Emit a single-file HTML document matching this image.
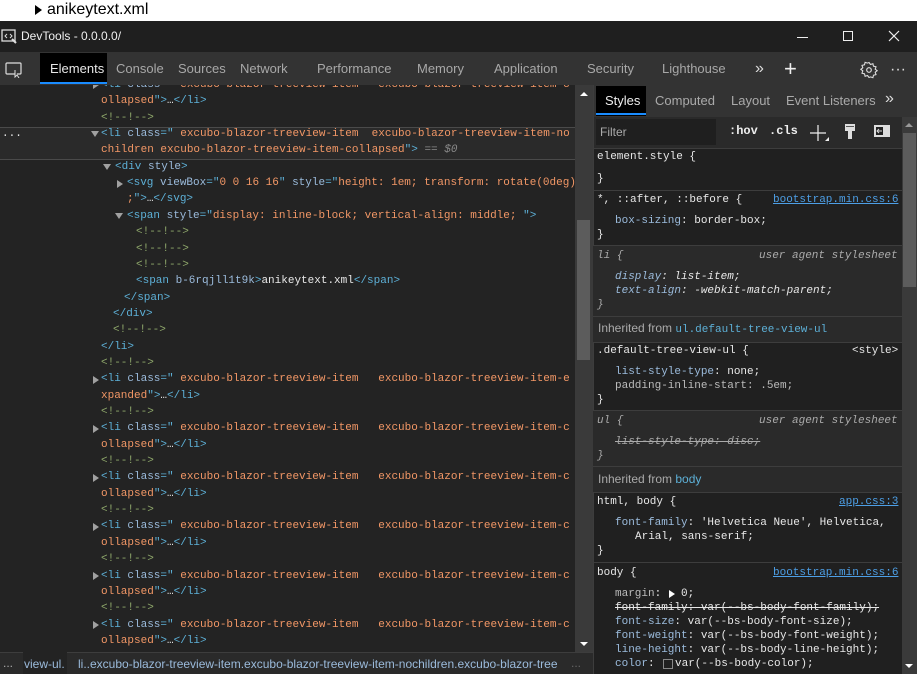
<!DOCTYPE html>
<html><head><meta charset="utf-8"><style>
*{margin:0;padding:0;box-sizing:border-box}
body{width:917px;height:674px;overflow:hidden;background:#232323;font-family:"Liberation Sans",sans-serif;position:relative}
.a{position:absolute;white-space:pre}
.m{font-family:"Liberation Mono",monospace;font-size:11px;line-height:16px}
.t{color:#5db0d7}.n{color:#9bbbdc}.v{color:#f29766}.c{color:#8fa86b}.w{color:#e8e8e8}.g{color:#8a8a8a}
.pn{color:#9bbbdc}.pv{color:#e8e8e8}.lk{color:#4d9fe6;text-decoration:underline}
.tri{position:absolute;width:0;height:0}
.tr{border-left:6px solid #a0a0a0;border-top:4px solid transparent;border-bottom:4px solid transparent}
.td{border-top:6px solid #a0a0a0;border-left:4px solid transparent;border-right:4px solid transparent}
.sep{position:absolute;left:593px;width:309px;height:1px;background:#3d3d3d}
.tab{position:absolute;top:52px;height:33px;line-height:33px;font-size:13px;color:#a8a8a8}
</style></head><body>
<div class="a" style="left:0;top:0;width:917px;height:21px;background:#fff"></div>
<div class="tri" style="left:35px;top:5px;border-left:7px solid #000;border-top:5px solid transparent;border-bottom:5px solid transparent"></div>
<div class="a" style="left:47px;top:1px;font-size:16px;color:#000">anikeytext.xml</div>
<div class="a" style="left:0;top:21px;width:917px;height:31px;background:#1f1f1f"></div>
<svg class="a" style="left:1px;top:28px" width="16" height="16" viewBox="0 0 16 16"><rect x="1" y="2" width="13" height="11" fill="none" stroke="#ddd" stroke-width="1.3"/><path d="M6 6l-2 2 2 2M9 6l2 2-2 2" stroke="#ddd" fill="none"/><path d="M11 11l4 4" stroke="#ddd" stroke-width="2"/></svg>
<div class="a" style="left:21px;top:29px;font-size:12px;color:#f0f0f0">DevTools - 0.0.0.0/</div>
<div class="a" style="left:797px;top:37px;width:11px;height:1px;background:#eee"></div>
<div class="a" style="left:843px;top:31px;width:10px;height:10px;border:1px solid #eee"></div>
<svg class="a" style="left:888px;top:30px" width="12" height="12"><path d="M1 1L11 11M11 1L1 11" stroke="#eee" stroke-width="1.2"/></svg>
<div class="a" style="left:0;top:52px;width:917px;height:33px;background:#333"></div>
<svg class="a" style="left:5px;top:62px" width="18" height="16"><rect x="1" y="1" width="15" height="11" rx="1" fill="none" stroke="#ddd" stroke-width="1.2"/><path d="M10 8l0 7 2-2 2 3" stroke="#ddd" fill="#333"/></svg>
<div class="a" style="left:40px;top:53px;width:67px;height:30px;background:#000"></div>
<div class="a" style="left:40px;top:82px;width:67px;height:2px;background:#1a8cff"></div>
<div class="tab" style="left:50px;color:#e8e8e8">Elements</div>
<div class="tab" style="left:116px">Console</div>
<div class="tab" style="left:178px">Sources</div>
<div class="tab" style="left:240px">Network</div>
<div class="tab" style="left:317px">Performance</div>
<div class="tab" style="left:417px">Memory</div>
<div class="tab" style="left:494px">Application</div>
<div class="tab" style="left:587px">Security</div>
<div class="tab" style="left:662px">Lighthouse</div>
<div class="tab" style="left:755px;color:#ddd;font-size:16px">»</div>
<div class="tab" style="left:784px;color:#eee;font-size:22px;font-weight:300">+</div>
<svg class="a" style="left:860px;top:61px" width="18" height="18" viewBox="0 0 18 18"><circle cx="9" cy="9" r="2.3" fill="none" stroke="#ddd" stroke-width="1.2"/><path d="M9 1.5l1.5 2 2.4-.8.6 2.5 2.5.6-.8 2.4 2 1.5-2 1.5.8 2.4-2.5.6-.6 2.5-2.4-.8L9 16.5l-1.5-2-2.4.8-.6-2.5-2.5-.6.8-2.4-2-1.5 2-1.5-.8-2.4 2.5-.6.6-2.5 2.4.8z" fill="none" stroke="#ddd" stroke-width="1.1"/></svg>
<div class="tab" style="left:890px;color:#ddd;font-size:16px;top:53px">···</div>

<div class="a" style="left:0;top:85px;width:576px;height:567px;overflow:hidden;background:#232323">
 <div class="a" style="left:0;top:42px;width:576px;height:33px;background:#2a2a2a;border-top:1px solid #4a4a4a;border-bottom:1px solid #4a4a4a"></div>
 <div class="a m" style="left:0;top:-8px;line-height:16.35px">
<div class="a" style="left:101px;top:0"><span class="t">&lt;li </span><span class="n">class</span><span class="t">="</span><span class="v"> excubo-blazor-treeview-item   excubo-blazor-treeview-item-c</span></div>
<div class="a" style="left:101px;top:16.35px"><span class="v">ollapsed</span><span class="t">"&gt;</span><span class="w">…</span><span class="t">&lt;/li&gt;</span></div>
<div class="a c" style="left:101px;top:32.7px">&lt;!--!--&gt;</div>
<div class="a w" style="left:2px;top:49px">...</div>
<div class="a" style="left:101px;top:49.05px"><span class="t">&lt;li </span><span class="n">class</span><span class="t">="</span><span class="v"> excubo-blazor-treeview-item  excubo-blazor-treeview-item-no</span></div>
<div class="a" style="left:101px;top:65.4px"><span class="v">children excubo-blazor-treeview-item-collapsed</span><span class="t">"&gt;</span><span class="g"> == <i>$0</i></span></div>
<div class="a" style="left:115px;top:81.75px"><span class="t">&lt;div </span><span class="n">style</span><span class="t">&gt;</span></div>
<div class="a" style="left:127px;top:98.1px"><span class="t">&lt;svg </span><span class="n">viewBox</span><span class="t">="</span><span class="v">0 0 16 16</span><span class="t">" </span><span class="n">style</span><span class="t">="</span><span class="v">height: 1em; transform: rotate(0deg)</span></div>
<div class="a" style="left:127px;top:114.45px"><span class="v">;</span><span class="t">"&gt;</span><span class="w">…</span><span class="t">&lt;/svg&gt;</span></div>
<div class="a" style="left:127px;top:130.8px"><span class="t">&lt;span </span><span class="n">style</span><span class="t">="</span><span class="v">display: inline-block; vertical-align: middle; </span><span class="t">"&gt;</span></div>
<div class="a c" style="left:136px;top:147.15px">&lt;!--!--&gt;</div>
<div class="a c" style="left:136px;top:163.5px">&lt;!--!--&gt;</div>
<div class="a c" style="left:136px;top:179.85px">&lt;!--!--&gt;</div>
<div class="a" style="left:136px;top:196.2px"><span class="t">&lt;span </span><span class="n">b-6rqjll1t9k</span><span class="t">&gt;</span><span class="w">anikeytext.xml</span><span class="t">&lt;/span&gt;</span></div>
<div class="a t" style="left:124px;top:212.55px">&lt;/span&gt;</div>
<div class="a t" style="left:113px;top:228.9px">&lt;/div&gt;</div>
<div class="a c" style="left:113px;top:245.25px">&lt;!--!--&gt;</div>
<div class="a t" style="left:101px;top:261.6px">&lt;/li&gt;</div>
<div class="a c" style="left:101px;top:277.95px">&lt;!--!--&gt;</div>
<div class="a" style="left:101px;top:294.3px"><span class="t">&lt;li </span><span class="n">class</span><span class="t">="</span><span class="v"> excubo-blazor-treeview-item   excubo-blazor-treeview-item-e</span></div>
<div class="a" style="left:101px;top:310.65px"><span class="v">xpanded</span><span class="t">"&gt;</span><span class="w">…</span><span class="t">&lt;/li&gt;</span></div>
<div class="a c" style="left:101px;top:327px">&lt;!--!--&gt;</div>
<div class="a" style="left:101px;top:343.35px"><span class="t">&lt;li </span><span class="n">class</span><span class="t">="</span><span class="v"> excubo-blazor-treeview-item   excubo-blazor-treeview-item-c</span></div>
<div class="a" style="left:101px;top:359.7px"><span class="v">ollapsed</span><span class="t">"&gt;</span><span class="w">…</span><span class="t">&lt;/li&gt;</span></div>
<div class="a c" style="left:101px;top:376.05px">&lt;!--!--&gt;</div>
<div class="a" style="left:101px;top:392.4px"><span class="t">&lt;li </span><span class="n">class</span><span class="t">="</span><span class="v"> excubo-blazor-treeview-item   excubo-blazor-treeview-item-c</span></div>
<div class="a" style="left:101px;top:408.75px"><span class="v">ollapsed</span><span class="t">"&gt;</span><span class="w">…</span><span class="t">&lt;/li&gt;</span></div>
<div class="a c" style="left:101px;top:425.1px">&lt;!--!--&gt;</div>
<div class="a" style="left:101px;top:441.45px"><span class="t">&lt;li </span><span class="n">class</span><span class="t">="</span><span class="v"> excubo-blazor-treeview-item   excubo-blazor-treeview-item-c</span></div>
<div class="a" style="left:101px;top:457.8px"><span class="v">ollapsed</span><span class="t">"&gt;</span><span class="w">…</span><span class="t">&lt;/li&gt;</span></div>
<div class="a c" style="left:101px;top:474.15px">&lt;!--!--&gt;</div>
<div class="a" style="left:101px;top:490.5px"><span class="t">&lt;li </span><span class="n">class</span><span class="t">="</span><span class="v"> excubo-blazor-treeview-item   excubo-blazor-treeview-item-c</span></div>
<div class="a" style="left:101px;top:506.85px"><span class="v">ollapsed</span><span class="t">"&gt;</span><span class="w">…</span><span class="t">&lt;/li&gt;</span></div>
<div class="a c" style="left:101px;top:523.2px">&lt;!--!--&gt;</div>
<div class="a" style="left:101px;top:539.55px"><span class="t">&lt;li </span><span class="n">class</span><span class="t">="</span><span class="v"> excubo-blazor-treeview-item   excubo-blazor-treeview-item-c</span></div>
<div class="a" style="left:101px;top:555.9px"><span class="v">ollapsed</span><span class="t">"&gt;</span><span class="w">…</span><span class="t">&lt;/li&gt;</span></div>
 </div>
 <div class="tri tr" style="left:93px;top:-4px"></div>
 <div class="tri td" style="left:91px;top:46px"></div>
 <div class="tri td" style="left:103px;top:79px"></div>
 <div class="tri tr" style="left:117px;top:95px"></div>
 <div class="tri td" style="left:115px;top:128px"></div>
 <div class="tri tr" style="left:93px;top:291px"></div>
 <div class="tri tr" style="left:93px;top:340px"></div>
 <div class="tri tr" style="left:93px;top:389px"></div>
 <div class="tri tr" style="left:93px;top:438px"></div>
 <div class="tri tr" style="left:93px;top:487px"></div>
 <div class="tri tr" style="left:93px;top:536px"></div>
</div>
<div class="a" style="left:575px;top:85px;width:18px;height:567px;background:#3a3a3a"></div>
<div class="a" style="left:577px;top:220px;width:13px;height:140px;background:#5c5c5c"></div>
<div class="tri" style="left:580px;top:92px;border-bottom:4px solid #fff;border-left:4px solid transparent;border-right:4px solid transparent"></div>
<div class="tri" style="left:580px;top:642px;border-top:4px solid #fff;border-left:4px solid transparent;border-right:4px solid transparent"></div>
<div class="a" style="left:593px;top:85px;width:1px;height:589px;background:#3d3d3d"></div>

<div class="a" style="left:0;top:652px;width:593px;height:22px;background:#2a2a2a;border-top:1px solid #3d3d3d"></div>
<div class="a" style="left:23px;top:652px;width:44px;height:22px;background:#232323"></div>
<div class="a" style="left:3px;top:656px;font-size:12px;color:#aaa">...</div>
<div class="a" style="left:24px;top:657px;font-size:12px;color:#9bbbdc">view-ul.</div>
<div class="a" style="left:78px;top:657px;font-size:12px;color:#9bbbdc">li..excubo-blazor-treeview-item.excubo-blazor-treeview-item-nochildren.excubo-blazor-tree</div>
<div class="a" style="left:571px;top:656px;font-size:12px;color:#666">...</div>

<div class="a" style="left:594px;top:85px;width:323px;height:589px;background:#202020"></div>
<div class="a" style="left:594px;top:85px;width:323px;height:32px;background:#333"></div>
<div class="a" style="left:596px;top:86px;width:50px;height:30px;background:#000"></div>
<div class="a" style="left:596px;top:113px;width:50px;height:2px;background:#1a8cff"></div>
<div class="a" style="left:605px;top:93px;font-size:13px;color:#eee">Styles</div>
<div class="a" style="left:655px;top:93px;font-size:13px;color:#aaa">Computed</div>
<div class="a" style="left:731px;top:93px;font-size:13px;color:#aaa">Layout</div>
<div class="a" style="left:786px;top:93px;font-size:13px;color:#aaa">Event Listeners</div>
<div class="a" style="left:885px;top:90px;font-size:16px;color:#ddd">»</div>
<div class="a" style="left:594px;top:117px;width:308px;height:31px;background:#2a2a2a"></div>
<div class="a" style="left:596px;top:119px;width:120px;height:26px;background:#1f1f1f"></div>
<div class="a" style="left:600px;top:125px;font-size:12px;color:#aaa">Filter</div>
<div class="a" style="left:729px;top:124px;font-size:12px;font-weight:bold;color:#eee;font-family:'Liberation Mono',monospace">:hov</div>
<div class="a" style="left:769px;top:124px;font-size:12px;font-weight:bold;color:#eee;font-family:'Liberation Mono',monospace">.cls</div>
<svg class="a" style="left:809px;top:124px" width="22" height="18"><path d="M9 1v16M1 9h16" stroke="#eee" stroke-width="1.2"/><path d="M16 17h4v-4z" fill="#eee"/></svg>
<svg class="a" style="left:843px;top:123px" width="14" height="17"><rect x="2" y="1" width="10" height="7" fill="#ddd"/><rect x="3" y="3" width="8" height="1" fill="#555"/><rect x="5" y="8" width="4" height="8" fill="#ddd"/></svg>
<svg class="a" style="left:873px;top:124px" width="18" height="14"><rect x="1" y="1" width="16" height="12" fill="#ddd"/><rect x="3" y="3" width="7" height="8" fill="#202020"/><path d="M4 7h5M6 5l-2 2 2 2" stroke="#ddd" stroke-width="1"/></svg>
<div class="a" style="left:902px;top:117px;width:15px;height:557px;background:#3a3a3a"></div>
<div class="a" style="left:903px;top:133px;width:13px;height:154px;background:#5c5c5c"></div>
<div class="tri" style="left:905px;top:123px;border-bottom:4px solid #999;border-left:4px solid transparent;border-right:4px solid transparent"></div>
<div class="tri" style="left:905px;top:664px;border-top:4px solid #fff;border-left:4px solid transparent;border-right:4px solid transparent"></div>

<div class="sep" style="top:148px"></div>
<div class="a m pv" style="left:597px;top:149px">element.style {</div>
<div class="a m pv" style="left:597px;top:171px">}</div>
<div class="sep" style="top:190px"></div>
<div class="a m pv" style="left:597px;top:192px">*, ::after, ::before {</div>
<div class="a m lk" style="left:773px;top:192px">bootstrap.min.css:6</div>
<div class="a m" style="left:615px;top:213px"><span class="pn">box-sizing</span><span class="pv">: border-box;</span></div>
<div class="a m pv" style="left:597px;top:227px">}</div>
<div class="a" style="left:593px;top:246px;width:309px;height:70px;background:#2a2a2a"></div>
<div class="sep" style="top:245px"></div>
<div class="a m" style="left:597px;top:248px;color:#aaa;font-style:italic">li {</div>
<div class="a m" style="left:759px;top:248px;color:#aaa;font-style:italic">user agent stylesheet</div>
<div class="a m" style="left:615px;top:269px;font-style:italic"><span class="pn">display</span><span class="pv">: list-item;</span></div>
<div class="a m" style="left:615px;top:283px;font-style:italic"><span class="pn">text-align</span><span class="pv">: -webkit-match-parent;</span></div>
<div class="a m" style="left:597px;top:297px;color:#aaa;font-style:italic">}</div>
<div class="sep" style="top:316px"></div>
<div class="a" style="left:593px;top:317px;width:309px;height:25px;background:#2a2a2a"></div>
<div class="a" style="left:598px;top:321px;font-size:12px;color:#aaa">Inherited from <span class="m t" style="font-size:11px">ul.default-tree-view-ul</span></div>
<div class="sep" style="top:342px"></div>
<div class="a m pv" style="left:597px;top:343px">.default-tree-view-ul {</div>
<div class="a m pv" style="left:852px;top:343px">&lt;style&gt;</div>
<div class="a m" style="left:615px;top:364px"><span class="pn">list-style-type</span><span class="pv">: none;</span></div>
<div class="a m" style="left:615px;top:378px"><span style="color:#bbb">padding-inline-start: .5em;</span></div>
<div class="a m pv" style="left:597px;top:392px">}</div>
<div class="a" style="left:593px;top:411px;width:309px;height:55px;background:#2a2a2a"></div>
<div class="sep" style="top:410px"></div>
<div class="a m" style="left:597px;top:413px;color:#aaa;font-style:italic">ul {</div>
<div class="a m" style="left:759px;top:413px;color:#aaa;font-style:italic">user agent stylesheet</div>
<div class="a m" style="left:615px;top:434px;font-style:italic;color:#aaa;text-decoration:line-through">list-style-type: disc;</div>
<div class="a m" style="left:597px;top:448px;color:#aaa;font-style:italic">}</div>
<div class="sep" style="top:466px"></div>
<div class="a" style="left:593px;top:467px;width:309px;height:25px;background:#2a2a2a"></div>
<div class="a" style="left:598px;top:472px;font-size:12px;color:#aaa">Inherited from <span class="t">body</span></div>
<div class="sep" style="top:492px"></div>
<div class="a m pv" style="left:597px;top:494px">html, body {</div>
<div class="a m lk" style="left:839px;top:494px">app.css:3</div>
<div class="a m" style="left:615px;top:515px"><span class="pn">font-family</span><span class="pv">: 'Helvetica Neue', Helvetica,</span></div>
<div class="a m pv" style="left:635px;top:529px">Arial, sans-serif;</div>
<div class="a m pv" style="left:597px;top:543px">}</div>
<div class="sep" style="top:562px"></div>
<div class="a m pv" style="left:597px;top:565px">body {</div>
<div class="a m lk" style="left:773px;top:565px">bootstrap.min.css:6</div>
<div class="a m" style="left:615px;top:586px"><span style="color:#bbb">margin</span><span class="pv">: </span></div>
<div class="tri" style="left:669px;top:590px;border-left:6px solid #fff;border-top:4px solid transparent;border-bottom:4px solid transparent"></div>
<div class="a m pv" style="left:681px;top:586px">0;</div>
<div class="a m pv" style="left:615px;top:600px;text-decoration:line-through">font-family: var(--bs-body-font-family);</div>
<div class="a m" style="left:615px;top:614px"><span class="pn">font-size</span><span class="pv">: var(--bs-body-font-size);</span></div>
<div class="a m" style="left:615px;top:628px"><span class="pn">font-weight</span><span class="pv">: var(--bs-body-font-weight);</span></div>
<div class="a m" style="left:615px;top:642px"><span class="pn">line-height</span><span class="pv">: var(--bs-body-line-height);</span></div>
<div class="a m" style="left:615px;top:656px"><span class="pn">color</span><span class="pv">: </span></div>
<div class="a" style="left:663px;top:659px;width:10px;height:10px;border:1px solid #888"></div>
<div class="a m pv" style="left:675px;top:656px">var(--bs-body-color);</div>
</body></html>
